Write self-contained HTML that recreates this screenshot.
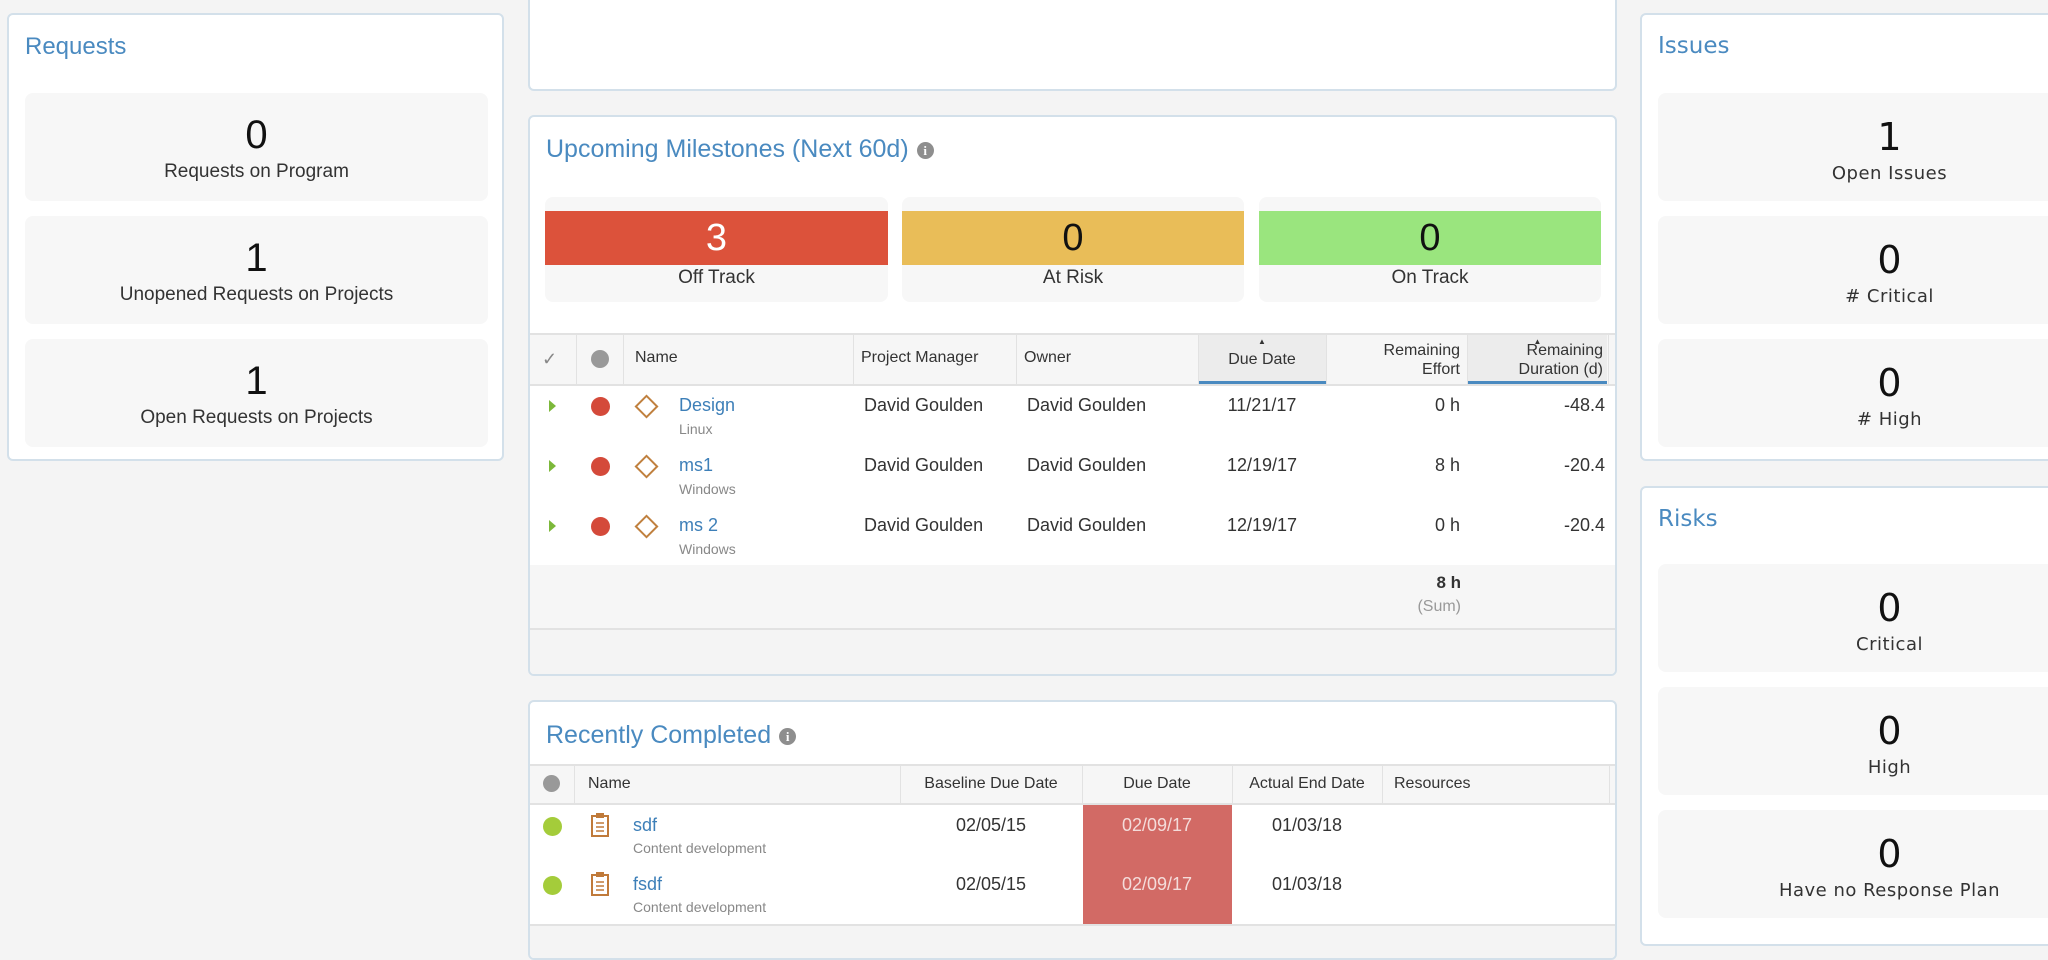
<!DOCTYPE html>
<html><head><meta charset="utf-8"><style>
*{box-sizing:border-box;margin:0;padding:0}
body{width:2048px;height:935px;overflow:hidden;background:#f4f4f4;font-family:"Liberation Sans",sans-serif;color:#333;position:relative}
.p{position:absolute;background:#fff;border:2px solid #d3e0ea;border-radius:6px}
.t{position:absolute;color:#4a8ac0;font-size:24px}
.card{position:absolute;background:#f7f7f7;border-radius:8px;text-align:center}
.card .n{font-size:40px;color:#111;line-height:40px}
.card .l{font-size:19px;color:#333;margin-top:6px}
.r .card .n{font-family:"DejaVu Sans",sans-serif;font-size:38px}
.r .card .l{font-family:"DejaVu Sans",sans-serif;font-size:18px;letter-spacing:.5px}
.r .t{font-family:"DejaVu Sans",sans-serif;font-size:23px}
.a{position:absolute;white-space:nowrap}
.vl{position:absolute;width:1px;background:#e2e2e2}
.dot{position:absolute;width:19px;height:19px;border-radius:50%}
.dia{position:absolute;width:17px;height:17px;border:2px solid #c0803e;transform:rotate(45deg)}
.tri{position:absolute;width:0;height:0;border-left:7px solid #7cb83a;border-top:6px solid transparent;border-bottom:6px solid transparent}
.info{display:inline-block;width:17px;height:17px;border-radius:50%;background:#8e8e8e;color:#fff;font-size:13px;font-weight:bold;text-align:center;line-height:17px;vertical-align:middle;margin-left:8px;font-family:"Liberation Serif",serif}
.link{color:#3d7fb8}
.sub{color:#888;font-size:14px}
</style></head><body>

<div class="p" style="left:7px;top:13px;width:497px;height:448px">
 <div class="t" style="left:16px;top:18px">Requests</div>
 <div class="card" style="left:16px;top:78px;width:463px;height:108px;padding-top:22px"><div class="n">0</div><div class="l">Requests on Program</div></div>
 <div class="card" style="left:16px;top:201px;width:463px;height:108px;padding-top:22px"><div class="n">1</div><div class="l">Unopened Requests on Projects</div></div>
 <div class="card" style="left:16px;top:324px;width:463px;height:108px;padding-top:22px"><div class="n">1</div><div class="l">Open Requests on Projects</div></div>
</div>

<div class="p" style="left:528px;top:-10px;width:1089px;height:101px"></div>

<div class="p" style="left:528px;top:115px;width:1089px;height:561px;overflow:hidden">
 <div class="t" style="left:16px;top:18px;font-size:25px">Upcoming Milestones (Next 60d)<span class="info">i</span></div>
 <div class="card" style="left:15px;top:80px;width:343px;height:105px"></div>
 <div class="card" style="left:372px;top:80px;width:342px;height:105px"></div>
 <div class="card" style="left:729px;top:80px;width:342px;height:105px"></div>
 <div class="a" style="left:15px;top:94px;width:343px;height:54px;background:#dc523b;color:#fff;font-size:38px;text-align:center;line-height:54px">3</div>
 <div class="a" style="left:372px;top:94px;width:342px;height:54px;background:#e9bd58;color:#111;font-size:38px;text-align:center;line-height:54px">0</div>
 <div class="a" style="left:729px;top:94px;width:342px;height:54px;background:#9ae57e;color:#111;font-size:38px;text-align:center;line-height:54px">0</div>
 <div class="a" style="left:15px;top:150px;width:343px;text-align:center;font-size:19px">Off Track</div>
 <div class="a" style="left:372px;top:150px;width:342px;text-align:center;font-size:19px">At Risk</div>
 <div class="a" style="left:729px;top:150px;width:342px;text-align:center;font-size:19px">On Track</div>
 <div class="a" style="left:0;top:216px;width:1089px;height:53px;background:#f6f6f6;border-top:2px solid #e2e2e2;border-bottom:2px solid #e2e2e2"></div>
 <div class="a" style="left:668px;top:218px;width:128px;height:49px;background:#ececec;border-bottom:3px solid #4a8ac0"></div>
 <div class="a" style="left:938px;top:218px;width:139px;height:49px;background:#ececec;border-bottom:3px solid #4a8ac0"></div>
 <div class="vl" style="left:46px;top:218px;height:49px"></div>
 <div class="vl" style="left:93px;top:218px;height:49px"></div>
 <div class="vl" style="left:323px;top:218px;height:49px"></div>
 <div class="vl" style="left:486px;top:218px;height:49px"></div>
 <div class="vl" style="left:668px;top:218px;height:49px"></div>
 <div class="vl" style="left:796px;top:218px;height:49px"></div>
 <div class="vl" style="left:937px;top:218px;height:49px"></div>
 <div class="vl" style="left:1078px;top:218px;height:49px"></div>
 <div class="a" style="left:12px;top:232px;color:#888;font-size:18px">✓</div>
 <div class="dot" style="left:61px;top:233px;width:18px;height:18px;background:#999"></div>
 <div class="a" style="left:105px;top:232px;font-size:16px">Name</div>
 <div class="a" style="left:331px;top:232px;font-size:16px">Project Manager</div>
 <div class="a" style="left:494px;top:232px;font-size:16px">Owner</div>
 <div class="a" style="left:668px;top:220px;width:128px;text-align:center;font-size:8px">▲</div>
 <div class="a" style="left:668px;top:234px;width:128px;text-align:center;font-size:16px">Due Date</div>
 <div class="a" style="left:796px;top:224px;width:134px;text-align:right;font-size:16px;line-height:19px">Remaining<br>Effort</div>
 <div class="a" style="left:938px;top:220px;width:139px;text-align:center;font-size:8px">▲</div>
 <div class="a" style="left:938px;top:224px;width:135px;text-align:right;font-size:16px;line-height:19px">Remaining<br>Duration (d)</div>
 <div class="tri" style="left:19px;top:283px"></div><div class="dot" style="left:61px;top:280px;background:#d44a3a"></div><div class="dia" style="left:108px;top:281px"></div>
 <div class="a link" style="left:149px;top:278px;font-size:18px">Design</div><div class="a sub" style="left:149px;top:304px">Linux</div>
 <div class="tri" style="left:19px;top:343px"></div><div class="dot" style="left:61px;top:340px;background:#d44a3a"></div><div class="dia" style="left:108px;top:341px"></div>
 <div class="a link" style="left:149px;top:338px;font-size:18px">ms1</div><div class="a sub" style="left:149px;top:364px">Windows</div>
 <div class="tri" style="left:19px;top:403px"></div><div class="dot" style="left:61px;top:400px;background:#d44a3a"></div><div class="dia" style="left:108px;top:401px"></div>
 <div class="a link" style="left:149px;top:398px;font-size:18px">ms 2</div><div class="a sub" style="left:149px;top:424px">Windows</div>
 <div class="a" style="left:334px;top:278px;font-size:18px">David Goulden</div>
 <div class="a" style="left:497px;top:278px;font-size:18px">David Goulden</div>
 <div class="a" style="left:334px;top:338px;font-size:18px">David Goulden</div>
 <div class="a" style="left:497px;top:338px;font-size:18px">David Goulden</div>
 <div class="a" style="left:334px;top:398px;font-size:18px">David Goulden</div>
 <div class="a" style="left:497px;top:398px;font-size:18px">David Goulden</div>
 <div class="a" style="left:668px;top:278px;width:128px;text-align:center;font-size:18px">11/21/17</div>
 <div class="a" style="left:668px;top:338px;width:128px;text-align:center;font-size:18px">12/19/17</div>
 <div class="a" style="left:668px;top:398px;width:128px;text-align:center;font-size:18px">12/19/17</div>
 <div class="a" style="left:796px;top:278px;width:134px;text-align:right;font-size:18px">0 h</div>
 <div class="a" style="left:796px;top:338px;width:134px;text-align:right;font-size:18px">8 h</div>
 <div class="a" style="left:796px;top:398px;width:134px;text-align:right;font-size:18px">0 h</div>
 <div class="a" style="left:938px;top:278px;width:137px;text-align:right;font-size:18px">-48.4</div>
 <div class="a" style="left:938px;top:338px;width:137px;text-align:right;font-size:18px">-20.4</div>
 <div class="a" style="left:938px;top:398px;width:137px;text-align:right;font-size:18px">-20.4</div>
 <div class="a" style="left:0;top:448px;width:1089px;height:65px;background:#f6f6f6;border-bottom:2px solid #e2e2e2"></div>
 <div class="a" style="left:796px;top:456px;width:135px;text-align:right;font-size:17px;font-weight:bold">8 h</div>
 <div class="a" style="left:796px;top:481px;width:135px;text-align:right;font-size:16px;color:#999">(Sum)</div>
 <div class="a" style="left:0;top:513px;width:1089px;height:50px;background:#f4f4f4"></div>
</div>

<div class="p" style="left:528px;top:700px;width:1089px;height:260px;overflow:hidden">
 <div class="t" style="left:16px;top:19px;font-size:25px">Recently Completed<span class="info">i</span></div>
 <div class="a" style="left:0;top:62px;width:1089px;height:41px;background:#f6f6f6;border-top:2px solid #e2e2e2;border-bottom:2px solid #e2e2e2"></div>
 <div class="vl" style="left:44px;top:64px;height:37px"></div>
 <div class="vl" style="left:370px;top:64px;height:37px"></div>
 <div class="vl" style="left:552px;top:64px;height:37px"></div>
 <div class="vl" style="left:702px;top:64px;height:37px"></div>
 <div class="vl" style="left:852px;top:64px;height:37px"></div>
 <div class="vl" style="left:1079px;top:64px;height:37px"></div>
 <div class="dot" style="left:13px;top:73px;width:17px;height:17px;background:#999"></div>
 <div class="a" style="left:58px;top:73px;font-size:16px">Name</div>
 <div class="a" style="left:370px;top:73px;width:182px;text-align:center;font-size:16px">Baseline Due Date</div>
 <div class="a" style="left:552px;top:73px;width:150px;text-align:center;font-size:16px">Due Date</div>
 <div class="a" style="left:702px;top:73px;width:150px;text-align:center;font-size:16px">Actual End Date</div>
 <div class="a" style="left:864px;top:73px;font-size:16px">Resources</div>
 <div class="a" style="left:553px;top:103px;width:149px;height:119px;background:#d26a65"></div>
 <div class="dot" style="left:13px;top:115px;background:#a4cc3a"></div>
 <div class="dot" style="left:13px;top:174px;background:#a4cc3a"></div>
 <svg class="a" style="left:60px;top:110px" width="20" height="26" viewBox="0 0 20 26"><rect x="2" y="4" width="16" height="20" fill="none" stroke="#c07a3a" stroke-width="2"/><rect x="6" y="1" width="8" height="5" fill="#c07a3a"/><path d="M6 11h8M6 15h8M6 19h8" stroke="#c07a3a" stroke-width="1.5"/></svg>
 <svg class="a" style="left:60px;top:169px" width="20" height="26" viewBox="0 0 20 26"><rect x="2" y="4" width="16" height="20" fill="none" stroke="#c07a3a" stroke-width="2"/><rect x="6" y="1" width="8" height="5" fill="#c07a3a"/><path d="M6 11h8M6 15h8M6 19h8" stroke="#c07a3a" stroke-width="1.5"/></svg>
 <div class="a link" style="left:103px;top:113px;font-size:18px">sdf</div><div class="a sub" style="left:103px;top:138px">Content development</div>
 <div class="a link" style="left:103px;top:172px;font-size:18px">fsdf</div><div class="a sub" style="left:103px;top:197px">Content development</div>
 <div class="a" style="left:370px;top:113px;width:182px;text-align:center;font-size:18px">02/05/15</div>
 <div class="a" style="left:370px;top:172px;width:182px;text-align:center;font-size:18px">02/05/15</div>
 <div class="a" style="left:552px;top:113px;width:150px;text-align:center;font-size:18px;color:#f4dcda">02/09/17</div>
 <div class="a" style="left:552px;top:172px;width:150px;text-align:center;font-size:18px;color:#f4dcda">02/09/17</div>
 <div class="a" style="left:702px;top:113px;width:150px;text-align:center;font-size:18px">01/03/18</div>
 <div class="a" style="left:702px;top:172px;width:150px;text-align:center;font-size:18px">01/03/18</div>
 <div class="a" style="left:0;top:222px;width:1089px;height:40px;background:#f4f4f4;border-top:2px solid #e2e2e2"></div>
</div>

<div class="r">
<div class="p" style="left:1640px;top:13px;width:480px;height:448px">
 <div class="t" style="left:16px;top:18px">Issues</div>
 <div class="card" style="left:16px;top:78px;width:463px;height:108px;padding-top:24px"><div class="n">1</div><div class="l">Open Issues</div></div>
 <div class="card" style="left:16px;top:201px;width:463px;height:108px;padding-top:24px"><div class="n">0</div><div class="l"># Critical</div></div>
 <div class="card" style="left:16px;top:324px;width:463px;height:108px;padding-top:24px"><div class="n">0</div><div class="l"># High</div></div>
</div>
<div class="p" style="left:1640px;top:486px;width:480px;height:460px">
 <div class="t" style="left:16px;top:18px">Risks</div>
 <div class="card" style="left:16px;top:76px;width:463px;height:108px;padding-top:24px"><div class="n">0</div><div class="l">Critical</div></div>
 <div class="card" style="left:16px;top:199px;width:463px;height:108px;padding-top:24px"><div class="n">0</div><div class="l">High</div></div>
 <div class="card" style="left:16px;top:322px;width:463px;height:108px;padding-top:24px"><div class="n">0</div><div class="l">Have no Response Plan</div></div>
</div>
</div>
</body></html>
